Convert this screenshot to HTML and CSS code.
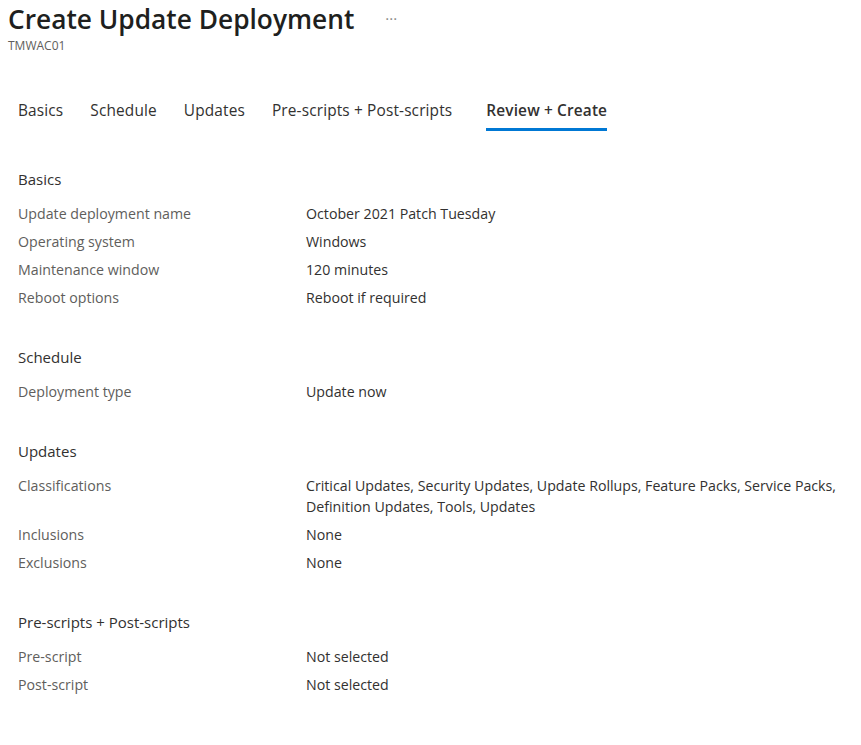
FILE: index.html
```html
<!DOCTYPE html>
<html>
<head>
<meta charset="utf-8">
<link rel="stylesheet" href="styles.css">
</head>
<body>
<div class="page">
  <header class="header">
    <div class="title-row">
      <h1 class="title">Create Update Deployment</h1>
      <span class="more">···</span>
    </div>
    <div class="subtitle">TMWAC01</div>
  </header>
  <nav class="tabs">
    <span class="tab">Basics</span>
    <span class="tab">Schedule</span>
    <span class="tab">Updates</span>
    <span class="tab">Pre-scripts + Post-scripts</span>
    <span class="tab active">Review + Create</span>
  </nav>
  <main class="content">
    <section class="section">
      <h2 class="section-title">Basics</h2>
      <div class="grid">
        <div class="label">Update deployment name</div><div class="value">October 2021 Patch Tuesday</div>
        <div class="label">Operating system</div><div class="value">Windows</div>
        <div class="label">Maintenance window</div><div class="value">120 minutes</div>
        <div class="label">Reboot options</div><div class="value">Reboot if required</div>
      </div>
    </section>
    <section class="section">
      <h2 class="section-title">Schedule</h2>
      <div class="grid">
        <div class="label">Deployment type</div><div class="value">Update now</div>
      </div>
    </section>
    <section class="section">
      <h2 class="section-title">Updates</h2>
      <div class="grid">
        <div class="label">Classifications</div><div class="value">Critical Updates, Security Updates, Update Rollups, Feature Packs, Service Packs, Definition Updates, Tools, Updates</div>
        <div class="label">Inclusions</div><div class="value">None</div>
        <div class="label">Exclusions</div><div class="value">None</div>
      </div>
    </section>
    <section class="section">
      <h2 class="section-title">Pre-scripts + Post-scripts</h2>
      <div class="grid">
        <div class="label">Pre-script</div><div class="value">Not selected</div>
        <div class="label">Post-script</div><div class="value">Not selected</div>
      </div>
    </section>
  </main>
</div>
</body>
</html>
```
FILE: styles.css
```css
* { box-sizing: border-box; }
html, body { margin: 0; padding: 0; background: #ffffff; }
body {
  font-family: "Open Sans", "Noto Sans", "Liberation Sans", sans-serif;
  color: #323130;
  font-size: 14px;
}
.page { padding: 0 8px; }
.header { padding-top: 2px; }
.title-row { display: flex; align-items: center; gap: 31px; height: 34px; }
.title {
  margin: 0;
  font-size: 26.3px;
  font-weight: 600;
  color: #201f1e;
  line-height: 34px;
}
.more { color: #8a8886; font-size: 15px; position: relative; top: -1px; }
.subtitle { font-size: 12px; color: #605e5c; line-height: 16px; margin-top: 2px; }
.tabs {
  display: flex;
  margin-top: 47px;
  padding-left: 10px;
}
.tab {
  font-size: 15.4px;
  letter-spacing: 0.15px;
  color: #323130;
  line-height: 20px;
  padding-bottom: 7px;
  margin-right: 27px;
  border-bottom: 3px solid transparent;
}
.tab.active { font-weight: 600; border-bottom-color: #0078d4; margin-left: 7px; }
.content { padding-left: 10px; padding-top: 38px; }
.section { margin-bottom: 39px; }
.section-title {
  margin: 0 0 14px 0;
  font-size: 15px;
  font-weight: 400;
  color: #323130;
  line-height: 20px;
}
.grid {
  display: grid;
  grid-template-columns: 288px 1fr;
  row-gap: 7px;
  font-size: 14.2px;
  line-height: 21px;
}
.label { color: #605e5c; }
.value { color: #323130; padding-right: 12px; }
```
